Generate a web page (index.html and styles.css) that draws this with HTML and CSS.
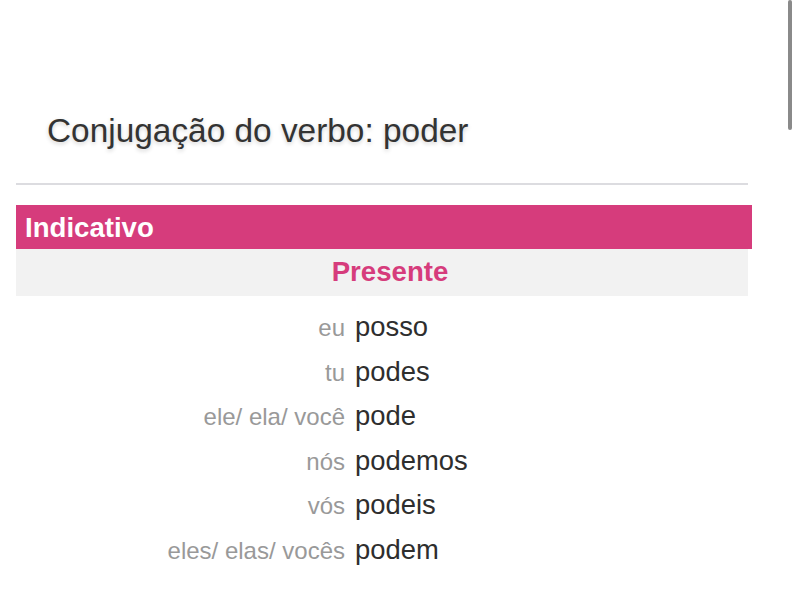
FILE: index.html
```html
<!DOCTYPE html>
<html lang="pt">
<head>
<meta charset="utf-8">
<title>Conjugação do verbo: poder</title>
<link rel="stylesheet" href="styles.css">
</head>
<body>
<div class="page">
  <h1 class="title">Conjugação do verbo: poder</h1>
  <div class="rule"></div>
  <div class="mood">Indicativo</div>
  <div class="tense">Presente</div>
  <div class="rows">
    <div class="row"><span class="pron">eu</span><span class="verb">posso</span></div>
    <div class="row"><span class="pron">tu</span><span class="verb">podes</span></div>
    <div class="row"><span class="pron">ele/ ela/ você</span><span class="verb">pode</span></div>
    <div class="row"><span class="pron">nós</span><span class="verb">podemos</span></div>
    <div class="row"><span class="pron">vós</span><span class="verb">podeis</span></div>
    <div class="row"><span class="pron">eles/ elas/ vocês</span><span class="verb">podem</span></div>
  </div>
</div>
<div class="scrollbar"></div>
</body>
</html>
```
FILE: styles.css
```css
html, body {
  margin: 0;
  padding: 0;
  background: #ffffff;
}
body {
  font-family: "Liberation Sans", Arial, sans-serif;
  color: #333333;
  overflow: hidden;
}
.page {
  margin-left: 16px;
  width: 732px;
}
.title {
  margin: 0;
  padding: 112px 0 0 31px;
  font-size: 33.4px;
  font-weight: normal;
  line-height: 38px;
  color: #333333;
  text-shadow: 0 2px 4px rgba(0, 0, 0, 0.18);
}
.rule {
  margin-top: 33px;
  height: 2px;
  background: #dcdce0;
}
.mood {
  margin-top: 20px;
  width: 736px;
  height: 44px;
  box-sizing: border-box;
  padding: 4px 0 0 9px;
  background: #d63c7c;
  color: #ffffff;
  font-size: 27.6px;
  font-weight: bold;
  line-height: 38px;
}
.tense {
  height: 47px;
  box-sizing: border-box;
  padding: 4px 0 0 16px;
  background: #f2f2f2;
  color: #d63c7c;
  font-size: 27.6px;
  font-weight: bold;
  line-height: 38px;
  text-align: center;
}
.rows {
  margin-top: 13px;
}
.row {
  display: flex;
  align-items: baseline;
  gap: 10px;
  height: 44.6px;
  line-height: 36px;
}
.pron {
  width: 329px;
  text-align: right;
  font-size: 24px;
  color: #999999;
}
.verb {
  font-size: 27.4px;
  color: #2e2e2e;
}
.scrollbar {
  position: fixed;
  top: 0;
  right: 8px;
  width: 4px;
  height: 130px;
  border-radius: 2px;
  background: #8a8a8a;
}
```
